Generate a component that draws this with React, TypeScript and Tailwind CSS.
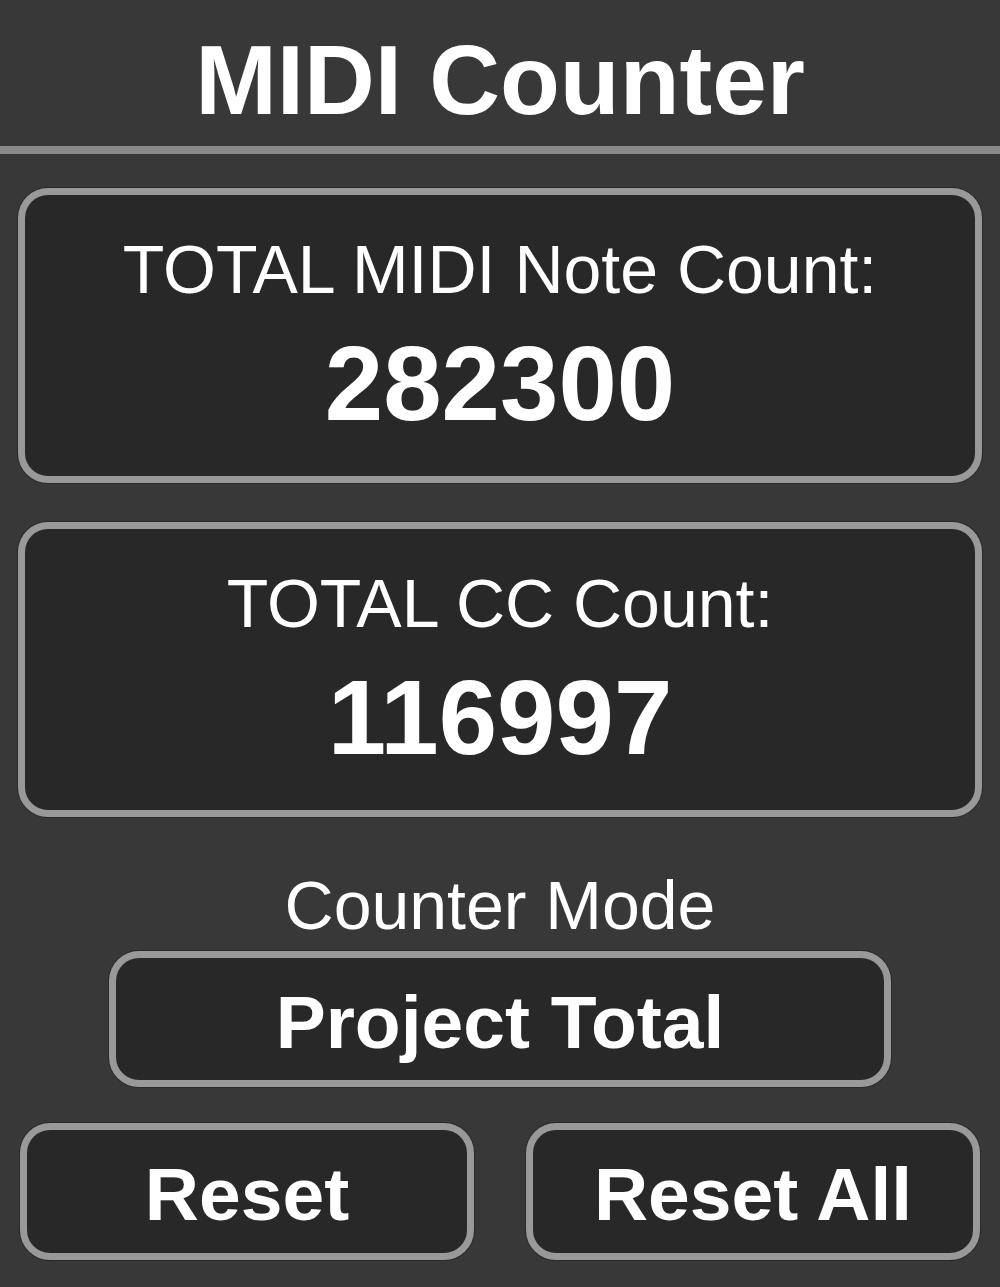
import React from "react";

const StatCard = ({ label, value }: { label: string; value: string }) => (
  <div className="h-[295px] rounded-[30px] border-[7px] border-[#999999] bg-[#282828] pt-[40px] flex flex-col items-center shadow-[0_0_0_1px_#2a2a2a]">
    <div className="text-[68px] leading-none">{label}</div>
    <div className="mt-[28px] text-[105px] leading-none font-bold">{value}</div>
  </div>
);

const PanelButton = ({ children, className = "" }: { children: React.ReactNode; className?: string }) => (
  <button
    className={`flex items-center justify-center rounded-[30px] border-[7px] border-[#999999] bg-[#282828] text-[75px] leading-none font-bold text-white shadow-[0_0_0_1px_#2a2a2a] ${className}`}
  >
    <span className="pt-[6px]">{children}</span>
  </button>
);

export default function App() {
  return (
    <div
      className="w-[1000px] h-[1287px] bg-[#383838] text-white flex flex-col overflow-hidden"
      style={{ fontFamily: '"Liberation Sans", Arial, sans-serif' }}
    >
      <header className="h-[146px] pt-[31px] flex justify-center">
        <h1 className="text-[98px] leading-none font-bold">MIDI Counter</h1>
      </header>
      <div className="h-[8px] bg-[#8a8a8a]" />

      <div className="px-[18px] pt-[34px] flex flex-col gap-[39px]">
        <StatCard label="TOTAL MIDI Note Count:" value="282300" />
        <StatCard label="TOTAL CC Count:" value="116997" />
      </div>

      <div className="mt-[54px] flex flex-col items-center">
        <div className="text-[68px] leading-none">Counter Mode</div>
        <PanelButton className="mt-[12px] w-[782px] h-[136px]">Project Total</PanelButton>
      </div>

      <div className="mt-[36px] px-[20px] flex gap-[52px]">
        <PanelButton className="flex-1 h-[137px]">Reset</PanelButton>
        <PanelButton className="flex-1 h-[137px]">Reset All</PanelButton>
      </div>
    </div>
  );
}
